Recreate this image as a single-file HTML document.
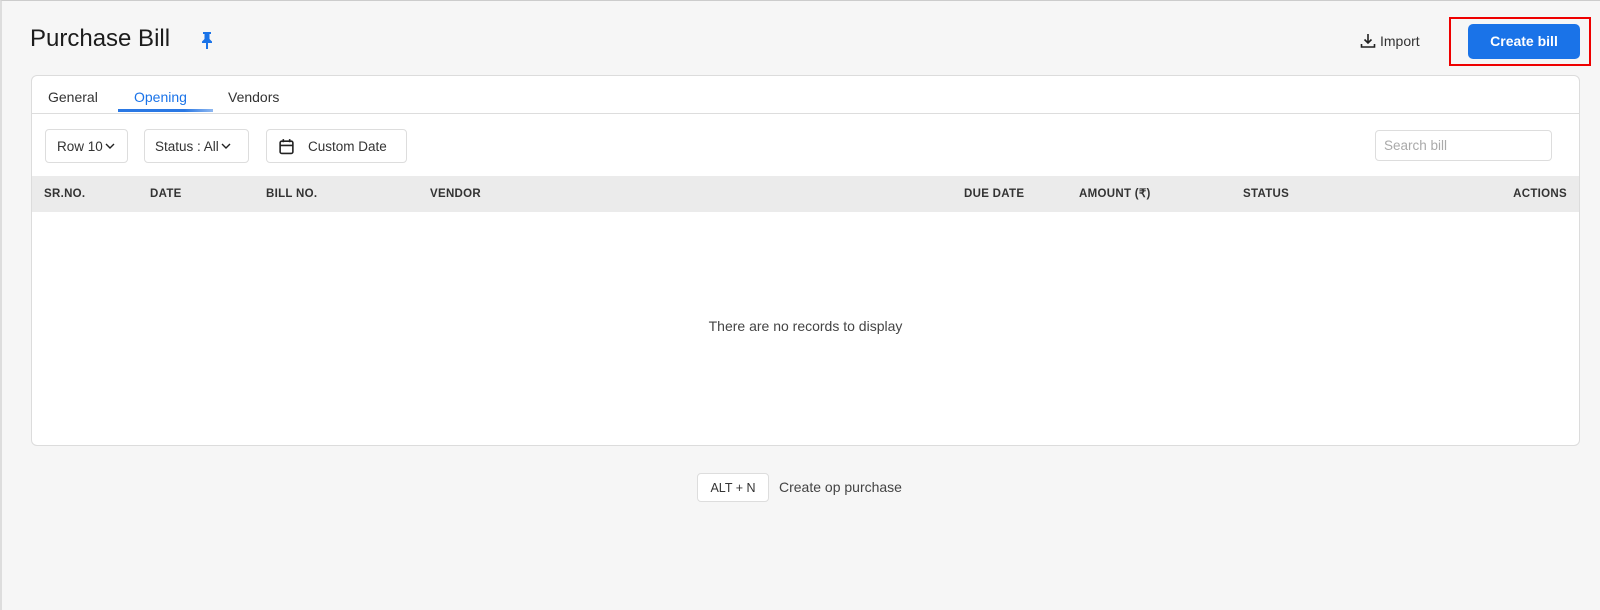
<!DOCTYPE html>
<html><head><style>
*{box-sizing:border-box;margin:0;padding:0}
body{width:1600px;height:610px;background:#f6f6f6;font-family:"Liberation Sans",sans-serif;color:#222;position:relative;overflow:hidden;border-top:1px solid #ccc;border-left:2px solid #ddd}
.a{position:absolute}
.title{left:28px;top:24px;font-size:24px;color:#1c1c1c}
.card{left:29px;top:74px;width:1549px;height:371px;background:#fff;border:1px solid #dcdcdc;border-radius:6px}
.tab{top:13px;font-size:14px;color:#333}
.box{border:1px solid #ddd;border-radius:4px;background:#fff;font-size:13.5px;color:#333;display:flex;align-items:center}
.th{top:0;height:36px;line-height:36px;font-size:11.5px;font-weight:bold;color:#333;letter-spacing:.3px}
</style></head><body>
<div class="a title">Purchase Bill</div>
<svg class="a" style="left:198px;top:30px" width="14" height="18" viewBox="0 0 14 18"><path d="M3 1h8v2H9.5v5l2.5 2.5V12H8v6H6v-6H2v-1.5L4.5 8V3H3z" fill="#1a73e8"/></svg>
<svg class="a" style="left:1358px;top:32px" width="16" height="16" viewBox="0 0 16 16" fill="none" stroke="#222" stroke-width="1.6"><path d="M8 1v9M4.5 6.5 8 10l3.5-3.5M1.5 11v3h13v-3"/></svg>
<div class="a" style="left:1378px;top:32px;font-size:14px;color:#333">Import</div>
<div class="a" style="left:1447px;top:16px;width:142px;height:49px;border:2px solid #e00"></div>
<div class="a" style="left:1466px;top:23px;width:112px;height:35px;background:#1a73e8;border-radius:5px;color:#fff;font-size:14px;font-weight:bold;text-align:center;line-height:35px">Create bill</div>
<div class="a card">
 <div class="a tab" style="left:16px">General</div>
 <div class="a tab" style="left:102px;color:#1a73e8">Opening</div>
 <div class="a" style="left:86px;top:33px;width:95px;height:3px;background:linear-gradient(90deg,#2a78e4 70%,#8fb8f0)"></div>
 <div class="a tab" style="left:196px">Vendors</div>
 <div class="a" style="left:0;top:37px;width:100%;height:1px;background:#ddd"></div>
 <div class="a box" style="left:13px;top:53px;width:83px;height:34px;padding-left:11px">Row 10<svg style="margin-left:2px" width="10" height="8" viewBox="0 0 10 8" fill="none" stroke="#222" stroke-width="1.4"><path d="M1 2l4 4 4-4"/></svg></div>
 <div class="a box" style="left:112px;top:53px;width:105px;height:34px;padding-left:10px">Status : All<svg style="margin-left:2px" width="10" height="8" viewBox="0 0 10 8" fill="none" stroke="#222" stroke-width="1.4"><path d="M1 2l4 4 4-4"/></svg></div>
 <div class="a box" style="left:234px;top:53px;width:141px;height:34px;padding-left:11px"><svg width="17" height="17" viewBox="0 0 16 16" fill="none" stroke="#222" stroke-width="1.5"><rect x="2" y="3" width="12" height="11.5" rx="1.5"/><path d="M2 7h12M5 1v3M11 1v3"/></svg><span style="margin-left:13px">Custom Date</span></div>
 <div class="a box" style="left:1343px;top:54px;width:177px;height:31px;padding-left:8px;color:#aaa">Search bill</div>
 <div class="a" style="left:0;top:100px;width:100%;height:36px;background:#ebebeb">
  <div class="a th" style="left:12px">SR.NO.</div>
  <div class="a th" style="left:118px">DATE</div>
  <div class="a th" style="left:234px">BILL NO.</div>
  <div class="a th" style="left:398px">VENDOR</div>
  <div class="a th" style="left:932px">DUE DATE</div>
  <div class="a th" style="left:1047px">AMOUNT (₹)</div>
  <div class="a th" style="left:1211px">STATUS</div>
  <div class="a th" style="right:12px">ACTIONS</div>
 </div>
 <div class="a" style="left:0;width:100%;top:242px;text-align:center;font-size:14px;color:#444">There are no records to display</div>
</div>
<div class="a box" style="left:695px;top:472px;width:72px;height:29px;justify-content:center;font-size:12.5px">ALT + N</div>
<div class="a" style="left:777px;top:478px;font-size:14px;color:#444">Create op purchase</div>
</body></html>
